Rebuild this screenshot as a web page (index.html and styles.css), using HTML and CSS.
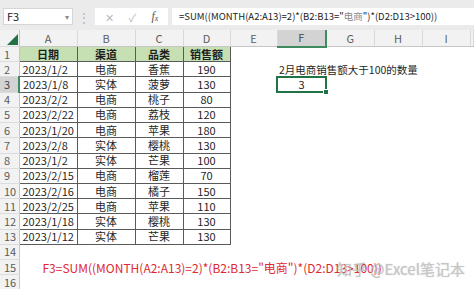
FILE: index.html
```html
<!DOCTYPE html>
<html lang="zh-CN">
<head>
    <meta charset="UTF-8" />
    <meta name="viewport" content="width=device-width, initial-scale=1" />
    <title>2月电商销售额大于100的数量</title>
    <link rel="stylesheet" href="styles.css">
</head>
<body>

    <div class="toolbar">
        <div class="namebox"><span>F3</span><span class="caret">▾</span></div>
        <div class="grip">⋮</div>
        <div class="fxbox">
            <span class="btn">✕</span>
            <span class="btn">✓</span>
            <span class="fx">f<sub>x</sub></span>
        </div>
        <div class="formula">=SUM((MONTH(A2:A13)=2)*(B2:B13="<span class="soft">电商</span>")*(D2:D13&gt;100))</div>
    </div>

    <table class="sheet">
        <colgroup>
            <col style="width:19px"><col style="width:58px"><col style="width:58px"><col style="width:48px">
            <col style="width:47px"><col style="width:47px"><col style="width:49px"><col style="width:48px">
            <col style="width:48px"><col style="width:48px"><col>
        </colgroup>
        <tr class="colhead">
            <th class="corner"><svg width="11" height="11" viewBox="0 0 11 11"><polygon points="11,0 11,11 0,11" fill="#217346"/></svg></th>
            <th>A</th><th>B</th><th>C</th><th>D</th><th>E</th><th class="active">F</th><th>G</th><th>H</th><th>I</th><th></th>
        </tr>
        <tr>
            <th>1</th>
            <td class="t head">日期</td><td class="t head">渠道</td><td class="t head">品类</td><td class="t head">销售额</td>
            <td></td><td></td><td></td><td></td><td></td><td></td>
        </tr>
        <tr>
            <th>2</th>
            <td class="t date">2023/1/2</td><td class="t">电商</td><td class="t">香蕉</td><td class="t">190</td>
            <td></td><td class="label">2月电商销售额大于100的数量</td><td></td><td></td><td></td><td></td>
        </tr>
        <tr>
            <th class="active">3</th>
            <td class="t date">2023/1/8</td><td class="t">实体</td><td class="t">菠萝</td><td class="t">130</td>
            <td></td><td class="sel">3</td><td></td><td></td><td></td><td></td>
        </tr>
        <tr>
            <th>4</th>
            <td class="t date">2023/2/2</td><td class="t">电商</td><td class="t">桃子</td><td class="t">80</td>
            <td></td><td></td><td></td><td></td><td></td><td></td>
        </tr>
        <tr>
            <th>5</th>
            <td class="t date">2023/2/22</td><td class="t">电商</td><td class="t">荔枝</td><td class="t">120</td>
            <td></td><td></td><td></td><td></td><td></td><td></td>
        </tr>
        <tr>
            <th>6</th>
            <td class="t date">2023/1/20</td><td class="t">电商</td><td class="t">苹果</td><td class="t">180</td>
            <td></td><td></td><td></td><td></td><td></td><td></td>
        </tr>
        <tr>
            <th>7</th>
            <td class="t date">2023/2/8</td><td class="t">实体</td><td class="t">樱桃</td><td class="t">130</td>
            <td></td><td></td><td></td><td></td><td></td><td></td>
        </tr>
        <tr>
            <th>8</th>
            <td class="t date">2023/1/2</td><td class="t">实体</td><td class="t">芒果</td><td class="t">100</td>
            <td></td><td></td><td></td><td></td><td></td><td></td>
        </tr>
        <tr>
            <th>9</th>
            <td class="t date">2023/2/15</td><td class="t">电商</td><td class="t">榴莲</td><td class="t">70</td>
            <td></td><td></td><td></td><td></td><td></td><td></td>
        </tr>
        <tr>
            <th>10</th>
            <td class="t date">2023/2/16</td><td class="t">电商</td><td class="t">橘子</td><td class="t">150</td>
            <td></td><td></td><td></td><td></td><td></td><td></td>
        </tr>
        <tr>
            <th>11</th>
            <td class="t date">2023/2/25</td><td class="t">电商</td><td class="t">苹果</td><td class="t">110</td>
            <td></td><td></td><td></td><td></td><td></td><td></td>
        </tr>
        <tr>
            <th>12</th>
            <td class="t date">2023/1/18</td><td class="t">实体</td><td class="t">樱桃</td><td class="t">130</td>
            <td></td><td></td><td></td><td></td><td></td><td></td>
        </tr>
        <tr>
            <th>13</th>
            <td class="t date">2023/1/12</td><td class="t">实体</td><td class="t">芒果</td><td class="t">130</td>
            <td></td><td></td><td></td><td></td><td></td><td></td>
        </tr>
        <tr>
            <th>14</th>
            <td></td><td></td><td></td><td></td><td></td><td></td><td></td><td></td><td></td><td></td>
        </tr>
        <tr>
            <th>15</th>
            <td class="note">F3=SUM((MONTH(A2:A13)=2)*(B2:B13="电商")*(D2:D13&gt;100))</td>
            <td></td><td></td><td></td><td></td><td></td><td></td><td></td><td></td><td></td>
        </tr>
        <tr>
            <th>16</th>
            <td></td><td></td><td></td><td></td><td></td><td></td><td></td><td></td><td></td><td></td>
        </tr>
    </table>

    <div class="watermark">知乎 @Excel笔记本</div>

</body>
</html>
```

FILE: styles.css
```css
body { margin: 0; width: 474px; height: 289px; overflow: hidden; position: relative; background: #fff; font-family: "Noto Sans CJK SC", "Liberation Sans", sans-serif; color: #1f1f1f; }

.toolbar { height: 30px; box-sizing: border-box; padding: 8px 0 0 3px; background: #ebebeb; display: flex; align-items: flex-start; font-size: 11px; }
.namebox { width: 70px; height: 17px; box-sizing: border-box; background: #fff; border: 1px solid #d6d6d6; display: flex; align-items: center; justify-content: space-between; padding: 0 3px; line-height: 1; }
.caret { color: #8a8a8a; font-size: 8px; }
.grip { width: 22px; text-align: center; color: #b5b5b5; font-size: 12px; line-height: 17px; }
.fxbox { width: 73px; height: 17px; background: #fff; display: flex; align-items: center; justify-content: space-around; padding: 0 2px; box-sizing: border-box; }
.btn { color: #b9b9b9; font-size: 11px; }
.fx { font-family: "Liberation Serif", serif; font-style: italic; color: #555; font-size: 12px; line-height: 1; }
.fx sub { font-size: 8px; vertical-align: -1px; }
.formula { flex: 1; height: 17px; margin-left: 4px; background: #fff; line-height: 17px; padding-left: 7px; white-space: nowrap; color: #222; font-size: 9.5px; }
.soft { color: #8a8a8a; }

.sheet { border-collapse: collapse; table-layout: fixed; width: 474px; font-size: 11px; }
.sheet tr { height: 15.23px; }
.sheet th, .sheet td { padding: 0; line-height: 13px; white-space: nowrap; }
.sheet th { font-weight: normal; color: #5c5c5c; background: #f2f2f2; }
.sheet .colhead th { height: 15px; border-right: 1px solid #d9d9d9; border-bottom: 1px solid #c6c6c6; }
.sheet .colhead th.corner { text-align: right; vertical-align: bottom; padding: 0 1px 1px 0; }
.corner svg { display: block; margin-left: auto; }
.sheet .colhead th.active { background: #d3d3d3; color: #444; border-bottom: 2px solid #3f8a5f; }
.sheet tr th:first-child { border-right: 1px solid #c6c6c6; border-bottom: 1px solid #dcdcdc; text-align: left; padding-left: 4px; }
.sheet tr th.active { background: #d3d3d3; color: #444; border-right: 2px solid #3f8a5f; }

.sheet .t { border: 1px solid #5a5a5a; text-align: center; }
.sheet .head { background: #c6e0b4; font-weight: bold; }
.sheet .date { text-align: left; padding-left: 3px; }

.sheet .label { padding-left: 2px; font-size: 10.5px; }
.sheet .sel { text-align: center; outline: 2px solid #217346; outline-offset: -1px; position: relative; }
.sel::after { content: ""; position: absolute; right: -3px; bottom: -3px; width: 4px; height: 4px; background: #217346; border: 1px solid #fff; }

.sheet .note { color: #dd2a30; font-size: 12px; padding-left: 23px; }

.watermark { position: absolute; left: 337px; top: 258px; font-size: 15px; color: rgba(200, 200, 200, 0.85); text-shadow: 0 0 1px rgba(120, 120, 120, 0.5); white-space: nowrap; }
```
